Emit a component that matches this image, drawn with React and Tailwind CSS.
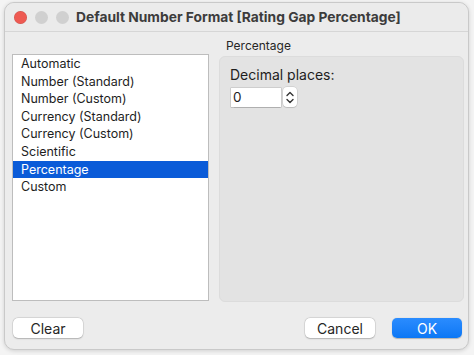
import React, { useState } from 'react';

const formats = [
    'Automatic',
    'Number (Standard)',
    'Number (Custom)',
    'Currency (Standard)',
    'Currency (Custom)',
    'Scientific',
    'Percentage',
    'Custom',
];

const Stepper = () => (
    <div className="ml-[2px] flex h-[20px] w-[14px] flex-col items-center justify-center rounded-[4px] bg-white shadow-[0_0_0_0.5px_rgba(0,0,0,0.15),0_1px_1px_rgba(0,0,0,0.1)]">
        <svg width="8" height="6" viewBox="0 0 8 6" className="mb-[1px]">
            <path d="M1 4.5 L4 1.5 L7 4.5" fill="none" stroke="#333" strokeWidth="1.4" strokeLinecap="round" strokeLinejoin="round" />
        </svg>
        <svg width="8" height="6" viewBox="0 0 8 6">
            <path d="M1 1.5 L4 4.5 L7 1.5" fill="none" stroke="#333" strokeWidth="1.4" strokeLinecap="round" strokeLinejoin="round" />
        </svg>
    </div>
);

const Button = ({ children, primary }) => (
    <button
        className={
            primary
                ? 'h-[20px] w-[70px] rounded-[5px] bg-gradient-to-b from-[#2a8cff] to-[#0a77f5] text-[14px] text-white shadow-[0_0.5px_1px_rgba(0,0,0,0.25)]'
                : 'h-[20px] w-[70px] rounded-[5px] bg-white text-[14px] text-[#262626] shadow-[0_0_0_0.5px_rgba(0,0,0,0.12),0_0.5px_1.5px_rgba(0,0,0,0.2)]'
        }
    >
        {children}
    </button>
);

export default function App() {
    const [selected, setSelected] = useState('Percentage');
    const [places, setPlaces] = useState('0');

    return (
        <div className="h-[355px] w-[474px] overflow-hidden bg-[#f4f4f4] pl-[4px] pt-[2px] font-['Inter','Noto_Sans',sans-serif]">
            <div className="flex h-[348px] w-[465px] flex-col rounded-[10px] border border-[#c9c9c9] bg-[#ececec] shadow-[0_1px_4px_rgba(0,0,0,0.15)]">
                {/* title bar */}
                <div className="flex h-[29px] items-center rounded-t-[10px] border-b border-[#d6d6d6] bg-[#ebebeb] pl-[9px]">
                    <div className="flex gap-[8px]">
                        <span className="h-[13px] w-[13px] rounded-full bg-[#ee5a52] shadow-[inset_0_0_0_0.5px_rgba(0,0,0,0.15)]" />
                        <span className="h-[13px] w-[13px] rounded-full bg-[#d0d0d0]" />
                        <span className="h-[13px] w-[13px] rounded-full bg-[#d0d0d0]" />
                    </div>
                    <div className="ml-[7px] text-[13.8px] font-bold text-[#3c3c3c]">
                        Default Number Format [Rating Gap Percentage]
                    </div>
                </div>

                {/* body */}
                <div className="flex flex-1 gap-[10px] pl-[7px] pt-[22px]">
                    <div className="h-[247px] w-[197px] border border-[#bdbdbd] bg-white">
                        {formats.map((f) => (
                            <div
                                key={f}
                                onClick={() => setSelected(f)}
                                className={
                                    'h-[17.6px] pl-[8px] text-[12.5px] leading-[17.6px] ' +
                                    (selected === f ? 'bg-[#0a5bd8] text-white' : 'text-[#1e1e1e]')
                                }
                            >
                                {f}
                            </div>
                        ))}
                    </div>

                    <div className="relative flex flex-col">
                        <div className="absolute -top-[17px] left-[7px] text-[12px] text-[#262626]">Percentage</div>
                        <div className="mt-[2px] h-[246px] w-[245px] rounded-[6px] border border-[#dcdcdc] bg-[#e3e3e3] pl-[10px] pt-[7px]">
                            <div className="text-[14px] text-[#1e1e1e]">Decimal places:</div>
                            <div className="mt-[2px] flex items-center pl-[1px]">
                                <input
                                    value={places}
                                    onChange={(e) => setPlaces(e.target.value)}
                                    className="h-[19px] w-[50px] bg-white px-[2px] text-[13.5px] text-[#1e1e1e] shadow-[0_0_0_0.5px_rgba(0,0,0,0.18),0_0.5px_1px_rgba(0,0,0,0.15)] outline-none"
                                />
                                <Stepper />
                            </div>
                        </div>
                    </div>
                </div>

                {/* buttons */}
                <div className="flex items-center pb-[11px] pl-[8px] pr-[6px]">
                    <Button>Clear</Button>
                    <div className="flex-1" />
                    <Button>Cancel</Button>
                    <div className="w-[17px]" />
                    <Button primary>OK</Button>
                </div>
            </div>
        </div>
    );
}
